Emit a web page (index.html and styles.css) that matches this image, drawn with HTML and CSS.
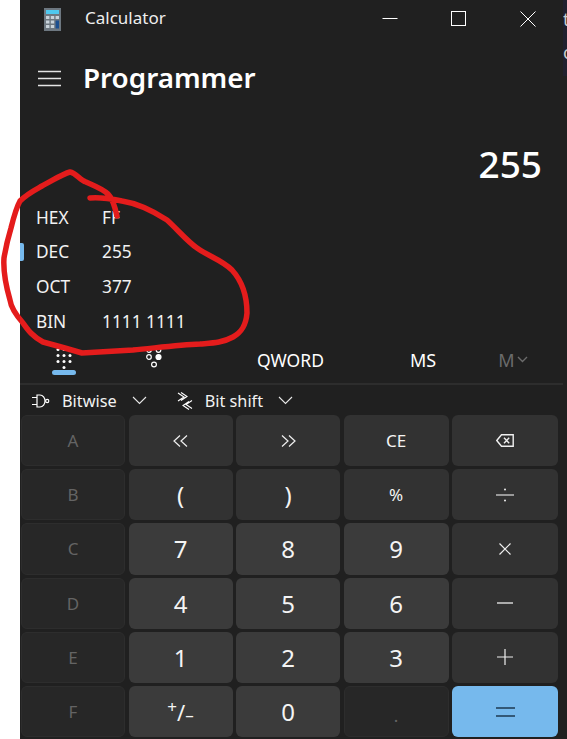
FILE: index.html
```html
<!DOCTYPE html>
<html lang="en">
<head>
    <meta charset="UTF-8">
    <title>Calculator</title>
    <link rel="stylesheet" href="styles.css">
</head>
<body>
    <div class="window">
        <div class="title-bar">
            <svg class="app-icon" width="17" height="23" viewBox="0 0 17 23">
                <rect width="17" height="23" fill="#6d7780"/>
                <rect x="2" y="2" width="13" height="4" fill="#4fc8ee"/>
                <rect x="2" y="8" width="3.4" height="3" fill="#c8d2da"/>
                <rect x="6.8" y="8" width="3.4" height="3" fill="#c8d2da"/>
                <rect x="11.6" y="8" width="3.4" height="3" fill="#c8d2da"/>
                <rect x="2" y="12.5" width="3.4" height="3" fill="#c8d2da"/>
                <rect x="6.8" y="12.5" width="3.4" height="3" fill="#c8d2da"/>
                <rect x="11.6" y="12.5" width="3.4" height="8" fill="#1c4f8f"/>
                <rect x="2" y="17" width="3.4" height="3" fill="#c8d2da"/>
                <rect x="6.8" y="17" width="3.4" height="3" fill="#c8d2da"/>
            </svg>
            <span class="app-name">Calculator</span>
            <div class="win-controls">
                <svg width="16" height="16" viewBox="0 0 16 16"><path d="M0.5 7.5H15.5" stroke="#fff" fill="none"/></svg>
                <svg width="16" height="16" viewBox="0 0 16 16"><rect x="0.5" y="0.5" width="14" height="14" stroke="#fff" fill="none"/></svg>
                <svg width="16" height="16" viewBox="0 0 16 16"><path d="M0.5 0.5L15.5 15.5M15.5 0.5L0.5 15.5" stroke="#fff" fill="none"/></svg>
            </div>
        </div>

        <div class="mode-bar">
            <svg class="menu-icon" width="23" height="17" viewBox="0 0 23 17"><path d="M0 1.5H23M0 8.5H23M0 15.5H23" stroke="#e4e4e4" stroke-width="1.3" fill="none"/></svg>
            <h1 class="mode-name">Programmer</h1>
        </div>

        <div class="display">255</div>

        <div class="radix-list">
            <div class="radix-row"><span class="radix-label">HEX</span><span>FF</span></div>
            <div class="radix-row active"><span class="radix-label">DEC</span><span>255</span></div>
            <div class="radix-row"><span class="radix-label">OCT</span><span>377</span></div>
            <div class="radix-row"><span class="radix-label">BIN</span><span>1111 1111</span></div>
        </div>

        <div class="tab-bar">
            <div class="tab tab-keypad active">
                <svg width="18" height="21" viewBox="0 0 18 21" fill="#fff">
                    <circle cx="3" cy="1.5" r="1.5"/><circle cx="9" cy="1.5" r="1.5"/><circle cx="15" cy="1.5" r="1.5"/>
                    <circle cx="3" cy="7.5" r="1.5"/><circle cx="9" cy="7.5" r="1.5"/><circle cx="15" cy="7.5" r="1.5"/>
                    <circle cx="3" cy="13.5" r="1.5"/><circle cx="9" cy="13.5" r="1.5"/><circle cx="15" cy="13.5" r="1.5"/>
                    <circle cx="9" cy="19.5" r="1.5"/>
                </svg>
            </div>
            <div class="tab tab-bits">
                <svg width="18" height="21" viewBox="0 0 18 21" fill="none" stroke="#fff" stroke-width="1.2">
                    <circle cx="4" cy="3" r="2.3"/><circle cx="13.5" cy="3" r="2.3"/>
                    <circle cx="4" cy="10" r="2.3"/><circle cx="13.5" cy="10" r="2.5" fill="#fff"/>
                    <circle cx="9" cy="17.5" r="2.4"/>
                </svg>
            </div>
            <div class="tab tab-word">QWORD</div>
            <div class="tab tab-ms">MS</div>
            <div class="tab tab-mem">M<svg width="11" height="7" viewBox="0 0 11 7"><path d="M1 1L5.5 5.5L10 1" stroke="#6b6b6b" stroke-width="1.4" fill="none"/></svg></div>
        </div>

        <div class="op-bar">
            <div class="op-menu">
                <svg width="18" height="14" viewBox="0 0 18 14" fill="none" stroke="#fff" stroke-width="1.2"><path d="M0 3.5H5M0 10.5H5M5 1H8C11 1 13 4 13 7C13 10 11 13 8 13H5Z"/><circle cx="15.2" cy="7" r="1.6"/></svg>
                <span>Bitwise</span>
                <svg class="chevron" width="15" height="9" viewBox="0 0 15 9"><path d="M1 1L7.5 7.5L14 1" stroke="#e8e8e8" stroke-width="1.1" fill="none"/></svg>
            </div>
            <div class="op-menu">
                <svg width="16" height="18" viewBox="0 0 16 18" fill="none" stroke="#fff" stroke-width="1.1"><path d="M1 1L7 5L1 9M4 0.5L10 4.5L4 8.5M15 8.5L9 12.5L15 16.5M12 9.5L6 13.5L12 17.5"/></svg>
                <span>Bit shift</span>
                <svg class="chevron" width="15" height="9" viewBox="0 0 15 9"><path d="M1 1L7.5 7.5L14 1" stroke="#e8e8e8" stroke-width="1.1" fill="none"/></svg>
            </div>
        </div>

        <div class="keypad">
            <div class="key off">A</div>
            <div class="key small">
                <svg width="15" height="12" viewBox="0 0 15 12" fill="none" stroke="#f0f0f0" stroke-width="1.2"><path d="M7 0.5L1 6L7 11.5M14 0.5L8 6L14 11.5"/></svg>
            </div>
            <div class="key small">
                <svg width="15" height="12" viewBox="0 0 15 12" fill="none" stroke="#f0f0f0" stroke-width="1.2"><path d="M1 0.5L7 6L1 11.5M8 0.5L14 6L8 11.5"/></svg>
            </div>
            <div class="key small">CE</div>
            <div class="key small">
                <svg width="18" height="13" viewBox="0 0 18 13" fill="none" stroke="#f0f0f0" stroke-width="1.4"><path d="M5.5 0.8H17.2V12.2H5.5L0.8 6.5Z"/><path d="M8 3.8L13.2 9.2M13.2 3.8L8 9.2"/></svg>
            </div>

            <div class="key off">B</div>
            <div class="key big">(</div>
            <div class="key big">)</div>
            <div class="key small">%</div>
            <div class="key small">
                <svg width="18" height="14" viewBox="0 0 18 14"><path d="M0 7H18" stroke="#eee" stroke-width="1.1"/><circle cx="9" cy="1.5" r="1" fill="#eee"/><circle cx="9" cy="12.5" r="1" fill="#eee"/></svg>
            </div>

            <div class="key off">C</div>
            <div class="key num">7</div>
            <div class="key num">8</div>
            <div class="key num">9</div>
            <div class="key small">
                <svg width="14" height="14" viewBox="0 0 14 14"><path d="M1.5 1.5L12.5 12.5M12.5 1.5L1.5 12.5" stroke="#eee" stroke-width="1.2"/></svg>
            </div>

            <div class="key off">D</div>
            <div class="key num">4</div>
            <div class="key num">5</div>
            <div class="key num">6</div>
            <div class="key small">
                <svg width="16" height="14" viewBox="0 0 16 14"><path d="M0 7H16" stroke="#eee" stroke-width="1.3"/></svg>
            </div>

            <div class="key off">E</div>
            <div class="key num">1</div>
            <div class="key num">2</div>
            <div class="key num">3</div>
            <div class="key small">
                <svg width="16" height="16" viewBox="0 0 16 16"><path d="M0 8H16M8 0V16" stroke="#eee" stroke-width="1.2"/></svg>
            </div>

            <div class="key off">F</div>
            <div class="key num sign"><span class="sign-plus">+</span>/<span class="sign-minus">–</span></div>
            <div class="key num">0</div>
            <div class="key off dot">.</div>
            <div class="key equals">
                <svg width="19" height="10" viewBox="0 0 19 10"><path d="M0 1H19M0 9H19" stroke="#1e3a52" stroke-width="1.5"/></svg>
            </div>
        </div>
    </div>

    <div class="peek">
        <span>t</span>
        <span>c</span>
    </div>

    <svg class="scribble" width="260" height="200" viewBox="0 0 260 200">
        <path d="M90 38C100 37 112 39 122 41C135 43 150 49 167 60C178 70 188 82 197 88C208 96 222 100 232 110C241 120 247 135 247 153C246 165 242 172 233 177C222 183 212 183 200 184C178 185 155 188 133 190C115 191 98 192 82 193C72 190 58 186 43 182C32 176 28 170 23 163C16 155 11 148 10 140C6 126 3 112 4 98C6 86 8 78 11 68C14 56 16 48 20 41C27 34 33 31 42 26C52 21 62 14 70 12C76 13 80 20 86 22C95 26 103 29 108 34C112 38 115 47 117 56" fill="none" stroke="#e41c1c" stroke-width="5.5" stroke-linecap="round" stroke-linejoin="round"/>
    </svg>
</body>
</html>
```

FILE: styles.css
```css
html,
body {
    margin: 0;
    height: 739px;
    overflow: hidden;
    background-color: #fff;
}

body {
    position: relative;
    font-family: "Noto Sans", "Open Sans", sans-serif;
    color: #fff;
}

.window {
    margin-left: 20px;
    width: 547px;
    height: 739px;
    background-color: #202020;
    display: flex;
    flex-direction: column;
}

.title-bar {
    height: 38px;
    display: flex;
    align-items: center;
    flex: none;
}

.app-icon {
    margin-left: 24px;
}

.app-name {
    margin-left: 24px;
    margin-bottom: 3px;
    font-size: 17px;
    color: #eee;
}

.win-controls {
    margin-left: auto;
    margin-right: 31px;
    display: flex;
    gap: 53px;
}

.mode-bar {
    height: 80px;
    display: flex;
    align-items: center;
    flex: none;
}

.menu-icon {
    margin-left: 18px;
}

.mode-name {
    margin: 0 0 2px 22px;
    font-size: 27.8px;
    font-weight: 600;
}

.display {
    height: 82px;
    box-sizing: border-box;
    padding: 0 25px 0 0;
    line-height: 92px;
    text-align: right;
    font-size: 37px;
    font-weight: 500;
    flex: none;
}

.radix-list {
    display: flex;
    flex-direction: column;
    flex: none;
}

.radix-row {
    position: relative;
    height: 34.6px;
    display: flex;
    align-items: center;
    padding-left: 16px;
    font-size: 17.3px;
    color: #f2f2f2;
}

.radix-label {
    width: 66px;
}

.radix-row.active::before {
    content: "";
    position: absolute;
    left: 0;
    top: 8px;
    width: 4px;
    height: 18px;
    border-radius: 0 2px 2px 0;
    background-color: #76b9ed;
}

.tab-bar {
    width: 543px;
    height: 46.6px;
    display: flex;
    align-items: center;
    flex: none;
    border-bottom: 2px solid #2d2d2d;
    box-sizing: border-box;
    padding-bottom: 2px;
    font-size: 17.5px;
}

.tab {
    display: flex;
    align-items: center;
    justify-content: center;
}

.tab-keypad {
    margin-left: 32px;
    width: 24px;
    position: relative;
    align-self: flex-start;
    margin-top: 10px;
}

.tab-keypad.active::after {
    content: "";
    position: absolute;
    left: 0;
    top: 22px;
    width: 24px;
    height: 5px;
    border-radius: 3px;
    background-color: #76b9ed;
}

.tab-bits {
    margin-left: 66px;
    width: 24px;
    align-self: flex-start;
    margin-top: 9px;
}

.tab-word {
    margin-left: 91px;
    width: 67px;
}

.tab-ms {
    margin-left: 86px;
    font-size: 18px;
}

.tab-mem {
    margin-left: 62px;
    font-size: 18px;
    color: #6b6b6b;
    gap: 2px;
}

.op-bar {
    height: 30px;
    padding-top: 2px;
    box-sizing: border-box;
    display: flex;
    align-items: center;
    flex: none;
    font-size: 16.3px;
    color: #f2f2f2;
}

.op-menu {
    display: flex;
    align-items: center;
    gap: 12px;
}

.op-menu:first-child {
    margin-left: 12px;
}

.op-menu:last-child {
    margin-left: 30px;
}

.chevron {
    margin-left: 3px;
}

.keypad {
    margin-left: 1px;
    display: grid;
    grid-template-columns: 104px 104px 104px 105px 106px;
    grid-auto-rows: 51.2px;
    gap: 3px 3.5px;
}

.key {
    display: flex;
    align-items: center;
    justify-content: center;
    background-color: #323232;
    border-radius: 6px;
    color: #f4f4f4;
    font-size: 17px;
}

.key.off {
    background-color: #272727;
    border: 1px solid #2d2d2d;
    color: #646464;
}

.key.num {
    background-color: #3b3b3b;
    font-size: 24px;
}

.key.big {
    font-size: 24px;
}

.key.sign {
    font-size: 22px;
    background-color: #3b3b3b;
}

.sign-plus {
    font-size: 17px;
    align-self: flex-start;
    margin-top: 9px;
}

.sign-minus {
    font-size: 17px;
    align-self: flex-end;
    margin-bottom: 11px;
}

.key.dot {
    align-items: flex-end;
    padding-bottom: 9px;
    box-sizing: border-box;
}

.key.equals {
    background-color: #76b9ed;
}

.peek {
    position: absolute;
    top: 0;
    left: 563px;
    width: 4px;
    height: 76px;
    padding-top: 3px;
    box-sizing: border-box;
    overflow: hidden;
    background-color: #20202e;
    color: #ccc;
    font-size: 18px;
    line-height: 33px;
}

.peek span {
    display: block;
}

.scribble {
    position: absolute;
    left: 0;
    top: 160px;
}
```
